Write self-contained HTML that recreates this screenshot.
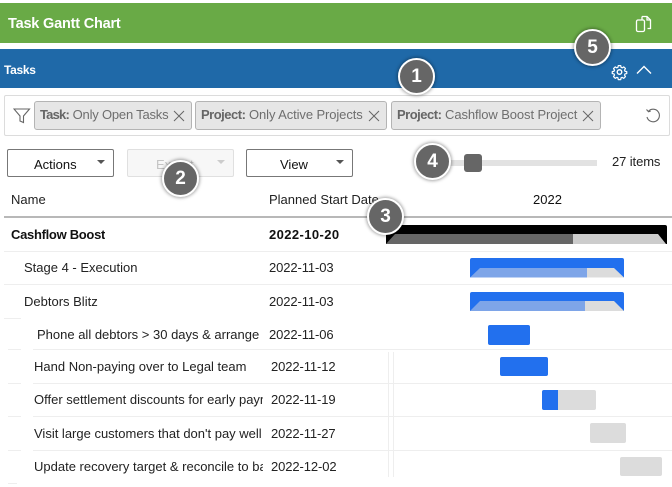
<!DOCTYPE html>
<html>
<head>
<meta charset="utf-8">
<style>
html,body{margin:0;padding:0;background:#fff}
body{width:672px;height:487px;position:relative;overflow:hidden;font-family:"Liberation Sans",sans-serif;color:#222}
.a{position:absolute}
.t{position:absolute;white-space:nowrap;font-size:13px;line-height:16px;overflow:hidden}
.chip{position:absolute;top:101px;height:27px;background:#e6e6e6;border:1px solid #b4b4b4;border-radius:3px;box-sizing:content-box;font-size:13px;line-height:26px;color:#6e6e6e;white-space:nowrap;padding-left:5px}
.chip b{font-weight:bold;color:#666;letter-spacing:-.5px}
.chip svg{position:absolute;top:8px;right:6px}
.btn{position:absolute;top:149px;height:26px;width:105px;border:1px solid #777;border-radius:2px;background:#fff;font-size:13px;line-height:29px;color:#111}
.btn i{position:absolute;top:10px;right:8px;width:0;height:0;border-left:4.5px solid transparent;border-right:4.5px solid transparent;border-top:4.5px solid #555}
.b{position:absolute;width:33px;height:33px;border-radius:50%;background:#666;border:2.5px solid #fff;box-shadow:0 0 3px 1px rgba(0,0,0,.35);color:#fff;font-weight:bold;font-size:19px;line-height:33px;text-align:center;z-index:5}
.l{position:absolute;height:1px;background:#eeeeee}
.bar{position:absolute;border-radius:2px}
.d{color:#222;letter-spacing:-.1px}
.n{color:#222}
</style>
</head>
<body>
<div class="a" style="left:0;top:3px;width:672px;height:40px;background:#69aa46"></div>
<div class="t" style="left:8px;top:14px;font-size:14.500px;line-height:20px;font-weight:bold;color:#fff;letter-spacing:-.2px">Task Gantt Chart</div>
<svg class="a" style="left:634px;top:14px" width="20" height="20" viewBox="0 0 20 20" fill="none" stroke="#fff" stroke-width="1.3"><path d="M8 2.500h5l3.500 3.500v8.500h-3"/><path d="M8 2.500v3"/><path d="M13 2.500v3.500h3.500"/><rect x="2.500" y="6" width="8" height="11.500" rx="1.500"/></svg>

<div class="a" style="left:0;top:49px;width:672px;height:39px;background:#1f69a8"></div>
<div class="t" style="left:4px;top:62px;font-size:12px;font-weight:bold;color:#fff;letter-spacing:-.3px">Tasks</div>
<svg class="a" style="left:611px;top:63px" width="17" height="18" viewBox="0 0 24 24" fill="none" stroke="#fff" stroke-width="2" stroke-linejoin="round"><circle cx="12" cy="12" r="3.200"/><path d="M10 2.500h4l.6 2.900 1.900.8 2.500-1.600 2.800 2.800-1.600 2.500.8 1.900 2.900.6v3.200l-2.900.6-.8 1.900 1.600 2.500-2.800 2.800-2.500-1.600-1.900.8-.6 2.900h-4l-.6-2.900-1.900-.8-2.500 1.600-2.800-2.800 1.600-2.500-.8-1.900-2.900-.6v-3.200l2.900-.6.8-1.900-1.600-2.500 2.800-2.800 2.500 1.600 1.900-.8z" transform="translate(12 12) scale(.86) translate(-12 -13)"/></svg>
<svg class="a" style="left:636px;top:64px" width="16" height="12" viewBox="0 0 16 12" fill="none" stroke="#fff" stroke-width="1.400"><path d="M1 9.500L8 2.500l7 7"/></svg>

<div class="a" style="left:4px;top:95px;width:664px;height:39px;border:1px solid #dcdcdc;border-radius:2px"></div>
<svg class="a" style="left:13px;top:108px" width="18" height="16" viewBox="0 0 18 16" fill="none" stroke="#666" stroke-width="1.100"><path d="M1 1h15.500l-6 7v6.500l-3.500-1.500V8z"/></svg>
<div class="chip" style="left:34px;width:151px"><b style="letter-spacing:-.8px">Task:</b> <span style="letter-spacing:-.2px">Only Open Tasks</span><svg width="12" height="12" viewBox="0 0 12 12" stroke="#666" stroke-width="1"><path d="M1 1l10 10M11 1L1 11"/></svg></div>
<div class="chip" style="left:195px;width:185px"><b>Project:</b> <span style="letter-spacing:-.1px">Only Active Projects</span><svg width="12" height="12" viewBox="0 0 12 12" stroke="#666" stroke-width="1"><path d="M1 1l10 10M11 1L1 11"/></svg></div>
<div class="chip" style="left:391px;width:203px"><b>Project:</b> <span style="letter-spacing:-.1px">Cashflow Boost Project</span><svg width="12" height="12" viewBox="0 0 12 12" stroke="#666" stroke-width="1"><path d="M1 1l10 10M11 1L1 11"/></svg></div>
<svg class="a" style="left:645px;top:108px" width="16" height="16" viewBox="0 0 16 16" fill="none" stroke="#666" stroke-width="1.100"><path d="M3.500 3.200A6.300 6.300 0 1 1 2 9"/><path d="M1.500 1.500l2 2.200 2.200-.6"/></svg>

<div class="btn" style="left:7px"><span style="position:absolute;left:26px">Actions</span><i></i></div>
<div class="btn" style="left:127px;border-color:#e0e0e0;background:#f7f7f7;color:#c4c4c4"><span style="position:absolute;left:28px">Export</span><i style="border-top-color:#ccc"></i></div>
<div class="btn" style="left:246px"><span style="position:absolute;left:33px">View</span><i></i></div>

<div class="a" style="left:450px;top:160px;width:147px;height:6px;background:#e2e2e2"></div>
<div class="a" style="left:464px;top:154px;width:18px;height:18px;background:#666;border-radius:3px"></div>
<div class="t" style="left:612px;top:154px;font-size:13px;color:#222;letter-spacing:-.1px">27 items</div>

<div class="t" style="left:11px;top:192px;color:#222">Name</div>
<div class="t" style="left:269px;top:192px;color:#222">Planned Start Date</div>
<div class="t" style="left:533px;top:192px;color:#111">2022</div>
<div class="a" style="left:4px;top:216px;width:668px;height:2px;background:#b8b8b8"></div>

<div class="t" style="left:11px;top:227px;font-weight:bold;color:#111;letter-spacing:-.3px">Cashflow Boost</div>
<div class="t" style="left:269px;top:227px;font-weight:bold;color:#111;letter-spacing:.4px">2022-10-20</div>
<div class="l" style="left:4px;top:251px;width:668px"></div>
<div class="t n" style="left:24px;top:260px">Stage 4 - Execution</div>
<div class="t d" style="left:269px;top:260px">2022-11-03</div>
<div class="l" style="left:4px;top:284px;width:668px"></div>
<div class="t n" style="left:24px;top:294px">Debtors Blitz</div>
<div class="t d" style="left:269px;top:294px">2022-11-03</div>
<div class="l" style="left:4px;top:318px;width:17px"></div>
<div class="t n" style="left:37px;top:327px;width:225px">Phone all debtors &gt; 30 days &amp; arrange</div>
<div class="t d" style="left:269px;top:327px">2022-11-06</div>
<div class="l" style="left:33px;top:349px;width:639px"></div>
<div class="l" style="left:8px;top:349px;width:13px"></div>
<div class="t n" style="left:34px;top:359px;width:229px">Hand Non-paying over to Legal team</div>
<div class="t d" style="left:271px;top:359px">2022-11-12</div>
<div class="l" style="left:33px;top:383px;width:639px"></div>
<div class="l" style="left:8px;top:383px;width:13px"></div>
<div class="t n" style="left:34px;top:392px;width:229px">Offer settlement discounts for early payment</div>
<div class="t d" style="left:271px;top:392px">2022-11-19</div>
<div class="l" style="left:33px;top:416px;width:639px"></div>
<div class="l" style="left:8px;top:416px;width:13px"></div>
<div class="t n" style="left:34px;top:426px;width:229px">Visit large customers that don't pay well</div>
<div class="t d" style="left:271px;top:426px">2022-11-27</div>
<div class="l" style="left:33px;top:450px;width:639px"></div>
<div class="l" style="left:8px;top:450px;width:13px"></div>
<div class="t n" style="left:34px;top:459px;width:229px">Update recovery target &amp; reconcile to bank</div>
<div class="t d" style="left:271px;top:459px">2022-12-02</div>
<div class="l" style="left:8px;top:483px;width:9px"></div>
<div class="a" style="left:388px;top:352px;width:1px;height:125px;background:#eee"></div>
<div class="a" style="left:393px;top:352px;width:1px;height:125px;background:#eee"></div>

<svg class="a" style="left:386px;top:225px" width="281" height="19" viewBox="0 0 281 19"><path d="M0 2a2 2 0 0 1 2-2h277a2 2 0 0 1 2 2v17H0z" fill="#000"/><path d="M0 19L9 9H187V19z" fill="#666"/><path d="M187 9H272L280 19H187z" fill="#ccc"/></svg>
<svg class="a" style="left:470px;top:258px" width="155" height="20" viewBox="0 0 155 20"><path d="M0 2a2 2 0 0 1 2-2h150a2 2 0 0 1 2 2v17.500H0z" fill="#2270ee"/><path d="M0 19.500L10 10H117V19.500z" fill="#7ea5e8"/><path d="M117 10H144L154 19.500H117z" fill="#dcdcdc"/></svg>
<svg class="a" style="left:470px;top:292px" width="155" height="20" viewBox="0 0 155 20"><path d="M0 2a2 2 0 0 1 2-2h150a2 2 0 0 1 2 2v17H0z" fill="#2270ee"/><path d="M0 19L10 9H115V19z" fill="#7ea5e8"/><path d="M115 9H144L154 19H115z" fill="#dcdcdc"/></svg>
<div class="bar" style="left:488px;top:325px;width:42px;height:20px;background:#2270ee"></div>
<div class="bar" style="left:500px;top:357px;width:48px;height:19px;background:#2270ee"></div>
<div class="bar" style="left:542px;top:390px;width:54px;height:20px;background:#dcdcdc"></div>
<div class="bar" style="left:542px;top:390px;width:16px;height:20px;background:#2270ee;border-radius:2px 0 0 2px"></div>
<div class="bar" style="left:590px;top:423px;width:36px;height:20px;background:#dcdcdc"></div>
<div class="bar" style="left:620px;top:457px;width:42px;height:19px;background:#dcdcdc"></div>

<div class="b" style="left:398px;top:58px">1</div>
<div class="b" style="left:162px;top:160px">2</div>
<div class="b" style="left:367px;top:198px">3</div>
<div class="b" style="left:414px;top:143px">4</div>
<div class="b" style="left:574px;top:29px">5</div>
</body>
</html>
